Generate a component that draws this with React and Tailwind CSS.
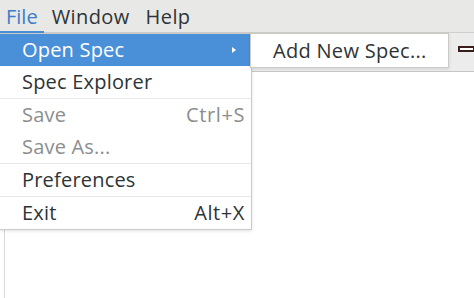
import React from 'react';

const items = [
  { label: 'Open Spec', active: true, arrow: true },
  { label: 'Spec Explorer', sepAfter: true },
  { label: 'Save', shortcut: 'Ctrl+S', disabled: true },
  { label: 'Save As...', disabled: true, sepAfter: true },
  { label: 'Preferences', sepAfter: true },
  { label: 'Exit', shortcut: 'Alt+X' },
];

const App = () => {
  return (
    <div className="relative w-[474px] h-[298px] overflow-hidden bg-white text-[#2e3436] font-['Open_Sans',sans-serif]">
      {/* menubar */}
      <div className="flex h-[33px] items-center bg-[#e8e8e7] border-b border-[#cfcfcc] text-[20px] leading-none">
        <div className="relative h-full flex items-center pl-[6px] pr-[6px] pt-[1px] text-[#3d7dc8]">
          File
          <div className="absolute left-0 right-0 bottom-[-1px] h-[2px] bg-[#4a90d9]" />
        </div>
        <div className="px-[6px] ml-[2px] pt-[1px] tracking-[0.4px]">Window</div>
        <div className="px-[6px] ml-[4px] pt-[1px] tracking-[0.4px]">Help</div>
      </div>

      {/* toolbar behind the menu */}
      <div className="flex h-[39px] items-center justify-end bg-[#ececec] border-b border-[#c6c6c4]">
        <div className="w-[17px] h-[6px] border-[2px] border-[#3a1d1d] bg-white mr-[-1px] mb-[7px]" />
      </div>

      {/* content area */}
      <div className="h-full ml-[4px] border-l border-[#d8d8d8]" />

      {/* dropdown */}
      <div className="absolute left-0 top-[33px] w-[252px] bg-white border border-l-0 border-[#cdcbc8] shadow-[0_1px_3px_rgba(0,0,0,0.12)] text-[20px] leading-none">
        {items.map((it) => (
          <div key={it.label}>
            <div
              className={`flex h-[32px] items-center justify-between pl-[22px] pr-[6px] tracking-[0.2px] ${
                it.active ? 'bg-[#4a90d9] text-white' : it.disabled ? 'text-[#8b8e8f]' : ''
              }`}
            >
              <span>{it.label}</span>
              {it.shortcut && <span className="tracking-[0.6px]">{it.shortcut}</span>}
              {it.arrow && (
                <svg width="6" height="8" viewBox="0 0 6 8" className="mr-[8px]">
                  <path d="M1 1 L5 4 L1 7 Z" fill="#ffffff" />
                </svg>
              )}
            </div>
            {it.sepAfter && <div className="h-[1px] bg-[#e8e8e6]" />}
          </div>
        ))}
      </div>

      {/* submenu */}
      <div className="absolute left-[250px] top-[33px] w-[199px] h-[35px] bg-white border border-[#cdcbc8] shadow-[0_1px_3px_rgba(0,0,0,0.12)] flex items-center pl-[22px] text-[20px] leading-none tracking-[0.3px]">
        Add New Spec...
      </div>
    </div>
  );
};

export default App;
